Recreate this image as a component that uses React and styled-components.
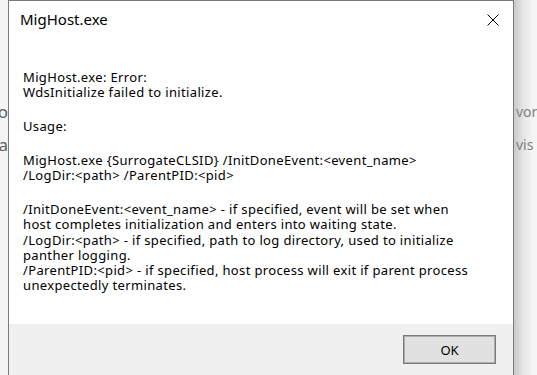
import React from 'react';
import styled, {createGlobalStyle} from 'styled-components';

const GlobalStyle = createGlobalStyle`
    body{
        margin:0;
        overflow:hidden;
        background:#f4f4f4;
        font-family: 'Noto Sans', 'Open Sans', sans-serif;
    }
`

const Desktop = styled.div`
    width:537px;
    height:375px;
    display:flex;
    overflow:hidden;
`

const Strip = styled.div`
    width:${props => props.width}px;
    flex-shrink:0;
    display:flex;
    flex-direction:column;
    align-items:${props => props.left ? 'flex-end' : 'flex-start'};
    padding-top:102px;
    gap:14px;
    overflow:hidden;
    background:${props => props.left
        ? '#f3f3f3'
        : 'linear-gradient(to right, #c9c9c9 0%, #e4e4e4 35%, #f3f3f3 70%, #f8f8f8 100%)'};
    color:${props => props.left ? '#5f5f5f' : '#808080'};
    font-size:${props => props.left ? 17 : 14}px;
    line-height:19px;
    white-space:nowrap;
    padding-left:${props => props.left ? 0 : 2}px;
`

const Dialog = styled.div`
    width:504px;
    flex-shrink:0;
    height:375px;
    border:1px solid #7a7a7a;
    border-bottom:none;
    background:#fff;
    display:flex;
    flex-direction:column;
    color:#000;
`

const TitleBar = styled.div`
    display:flex;
    justify-content:space-between;
    align-items:flex-start;
    padding:8px 14px 0 11px;
    height:41px;

    h1{
        margin:0;
        font-weight:normal;
        font-size:15px;
        line-height:20px;
    }
`

const Close = styled.button`
    border:none;
    background:none;
    padding:0;
    margin-top:5px;
    width:12px;
    height:12px;
    display:flex;
`

const Body = styled.div`
    padding:20px 10px 0 14px;
    height:254px;
    font-size:13px;
    letter-spacing:0.35px;
    line-height:15.3px;
    white-space:nowrap;

    p{
        margin:0 0 18.5px 0;
    }
`

const Footer = styled.div`
    flex:1;
    background:#f0f0f0;
    display:flex;
    justify-content:flex-end;
    align-items:flex-start;
    padding:11px 17px 0 0;
`

const Button = styled.button`
    width:93px;
    height:29px;
    background:#e1e1e1;
    border:1px solid #7a7a7a;
    box-shadow: inset 0 0 0 1px #adadad;
    font-family:inherit;
    font-size:13px;
    color:#000;
    padding:0;
`

const lines = [
    ['MigHost.exe: Error:', 'WdsInitialize failed to initialize.'],
    ['Usage:'],
    ['MigHost.exe {SurrogateCLSID} /InitDoneEvent:<event_name>', '/LogDir:<path> /ParentPID:<pid>'],
    [
        '/InitDoneEvent:<event_name> - if specified, event will be set when',
        'host completes initialization and enters into waiting state.',
        '/LogDir:<path> - if specified, path to log directory, used to initialize',
        'panther logging.',
        '/ParentPID:<pid> - if specified, host process will exit if parent process',
        'unexpectedly terminates.',
    ],
]

const App = () => {
    return (
        <Desktop>
            <GlobalStyle />
            <Strip width={8} left>
                <span>fo</span>
                <span>ta</span>
            </Strip>
            <Dialog>
                <TitleBar>
                    <h1>MigHost.exe</h1>
                    <Close aria-label="Close">
                        <svg width="12" height="12" viewBox="0 0 12 12">
                            <path d="M0.5 0.5 L11.5 11.5 M11.5 0.5 L0.5 11.5" stroke="#000" strokeWidth="1" />
                        </svg>
                    </Close>
                </TitleBar>
                <Body>
                    {lines.map((para, i) => (
                        <p key={i}>
                            {para.map((l, j) => <React.Fragment key={j}>{l}{j < para.length - 1 && <br />}</React.Fragment>)}
                        </p>
                    ))}
                </Body>
                <Footer>
                    <Button>OK</Button>
                </Footer>
            </Dialog>
            <Strip width={23}>
                <span>vor</span>
                <span>vis</span>
            </Strip>
        </Desktop>
    )
}

export default App
